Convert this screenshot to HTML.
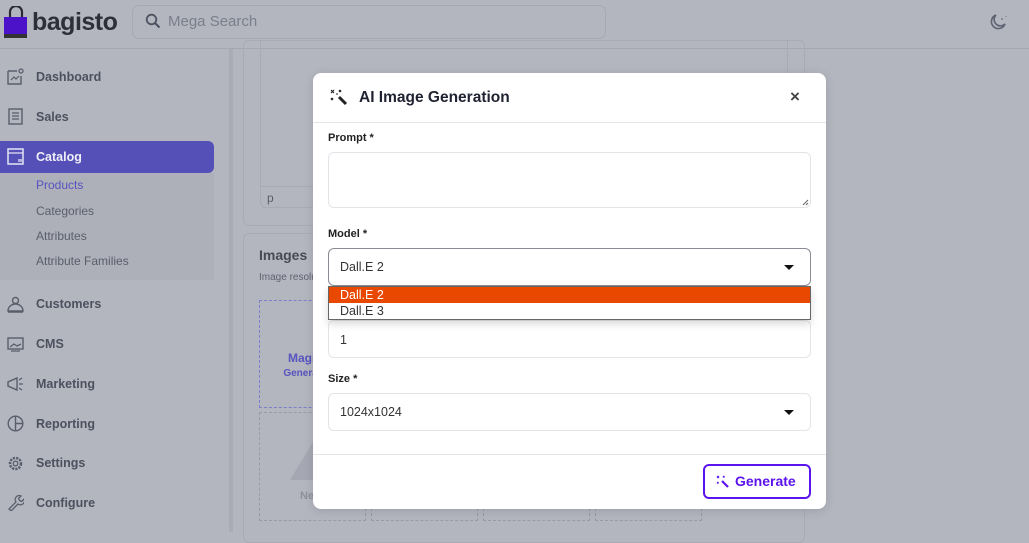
<!DOCTYPE html>
<html><head><style>
*{box-sizing:border-box;margin:0;padding:0}
body{width:1029px;height:532px;overflow:hidden;background:#b3b5bf;font-family:"Liberation Sans",sans-serif;position:relative;color:#3a3d47}
.a{position:absolute}
.nav{position:absolute;left:36px;font-size:12.5px;font-weight:bold;color:#4d515e}
.sub{position:absolute;left:36px;font-size:12px;color:#5a5e6b}
.ic{position:absolute;left:7px;width:17px;height:17px}
.lbl{position:absolute;left:15px;font-size:11px;font-weight:bold;color:#222}
.box{position:absolute;left:15px;width:483px;border:1px solid #e3e4e8;border-radius:6px;background:#fff;font-size:12.5px;color:#333}
.tri{position:absolute;right:16px;top:50%;margin-top:-2px;border-left:5px solid transparent;border-right:5px solid transparent;border-top:5px solid #111}
.dash{position:absolute;border:1px dashed #999aa6}
</style></head><body>
<div class="a" style="left:0;top:48px;width:1029px;height:1px;background:#a5a7b2"></div>
<svg class="a" style="left:4px;top:6px" width="24" height="32" viewBox="0 0 24 32"><path d="M6 11V6a6 6 0 0 1 12 0v5" fill="none" stroke="#2b2a35" stroke-width="2.2"/><rect x="0" y="11" width="23" height="17" fill="#4b12c9"/><rect x="0" y="28" width="23" height="4" fill="#333"/></svg>
<div class="a" style="left:32px;top:8px;font-size:25px;font-weight:bold;color:#2e2f38;letter-spacing:-0.5px">bagisto</div>
<div class="a" style="left:132px;top:5px;width:474px;height:34px;border:1px solid #a6a8b3;border-radius:7px"></div>
<svg class="a" style="left:145px;top:13px" width="16" height="16" viewBox="0 0 16 16"><circle cx="6.5" cy="6.5" r="4.8" fill="none" stroke="#4e5260" stroke-width="1.8"/><path d="M10 10l4.5 4.5" stroke="#4e5260" stroke-width="2"/></svg>
<div class="a" style="left:168px;top:13px;font-size:15px;color:#7b7f8c">Mega Search</div>
<svg class="a" style="left:988px;top:12px" width="22" height="20" viewBox="0 0 22 20"><path d="M8 3a7 7 0 1 0 9 9a6 6 0 0 1-9-9z" fill="none" stroke="#5f6270" stroke-width="1.6"/><path d="M14 6l1 1-1 1-1-1z M18 4l.6.6-.6.6-.6-.6z" fill="#5f6270"/></svg>
<div class="a" style="left:229px;top:49px;width:4px;height:483px;background:#a9abb6"></div>
<div class="a" style="left:0;top:141px;width:214px;height:32px;background:#5550b8;border-radius:0 6px 6px 0"></div>
<div class="a" style="left:0;top:173px;width:214px;height:107px;background:#adafb9"></div>
<svg class="ic" style="top:68px" viewBox="0 0 17 17"><path d="M1 3h9M1 3v13h13V8" fill="none" stroke="#5a5e6b" stroke-width="1.4"/><circle cx="14" cy="3" r="2" fill="none" stroke="#5a5e6b" stroke-width="1.3"/><path d="M4 12l3-3 2 2 3-3" fill="none" stroke="#5a5e6b" stroke-width="1.2"/></svg>
<div class="nav" style="top:70px">Dashboard</div>
<svg class="ic" style="top:108px" viewBox="0 0 17 17"><rect x="2" y="1" width="13" height="15" fill="none" stroke="#5a5e6b" stroke-width="1.4"/><path d="M5 5h7M5 8h7M5 11h7" stroke="#5a5e6b" stroke-width="1.3"/></svg>
<div class="nav" style="top:110px">Sales</div>
<svg class="ic" style="top:148px" viewBox="0 0 17 17"><rect x="1" y="1" width="15" height="15" fill="none" stroke="#e4e4f3" stroke-width="1.5"/><path d="M1 5h15M12 11v3M14 11v3" stroke="#e4e4f3" stroke-width="1.3"/></svg>
<div class="nav" style="top:150px;color:#eeeef8">Catalog</div>
<div class="sub" style="top:178px;color:#5753bf">Products</div>
<div class="sub" style="top:204px">Categories</div>
<div class="sub" style="top:229px">Attributes</div>
<div class="sub" style="top:254px">Attribute Families</div>
<svg class="ic" style="top:296px" viewBox="0 0 17 17"><circle cx="8.5" cy="4.5" r="3" fill="none" stroke="#5a5e6b" stroke-width="1.4"/><path d="M1 15a7.5 7 0 0 1 15 0zM1 16h15" fill="none" stroke="#5a5e6b" stroke-width="1.4"/></svg>
<div class="nav" style="top:297px">Customers</div>
<svg class="ic" style="top:336px" viewBox="0 0 17 17"><rect x="1" y="2" width="15" height="11" fill="none" stroke="#5a5e6b" stroke-width="1.4"/><path d="M3 11l4-3 3 2 4-2M4 15h9" fill="none" stroke="#5a5e6b" stroke-width="1.3"/></svg>
<div class="nav" style="top:337px">CMS</div>
<svg class="ic" style="top:375px" viewBox="0 0 17 17"><path d="M1 7v4l9 4V3z" fill="none" stroke="#5a5e6b" stroke-width="1.4"/><path d="M12 5l3-2M12 9h4M12 13l3 2" stroke="#5a5e6b" stroke-width="1.3"/></svg>
<div class="nav" style="top:377px">Marketing</div>
<svg class="ic" style="top:415px" viewBox="0 0 17 17"><circle cx="8.5" cy="8.5" r="7.3" fill="none" stroke="#5a5e6b" stroke-width="1.4"/><path d="M8.5 1.2v14.6M8.5 8.5h7.3" stroke="#5a5e6b" stroke-width="1.4"/></svg>
<div class="nav" style="top:417px">Reporting</div>
<svg class="ic" style="top:455px" viewBox="0 0 17 17"><circle cx="8.5" cy="8.5" r="5.5" fill="none" stroke="#5a5e6b" stroke-width="2.5" stroke-dasharray="2.2 1.1"/><circle cx="8.5" cy="8.5" r="2.3" fill="none" stroke="#5a5e6b" stroke-width="1.3"/></svg>
<div class="nav" style="top:456px">Settings</div>
<svg class="ic" style="top:494px" viewBox="0 0 17 17"><path d="M2 15l7-7a4 4 0 0 1 5-6l-2.5 2.5 1 2 2 1L17 5a4 4 0 0 1-6 5l-7 7z" fill="none" stroke="#5a5e6b" stroke-width="1.3"/></svg>
<div class="nav" style="top:496px">Configure</div>
<div class="a" style="left:243px;top:40px;width:562px;height:186px;border:1px solid #a8aab5;border-radius:6px"></div>
<div class="a" style="left:260px;top:40px;width:528px;height:168px;border:1px solid #a8aab5;border-radius:0 0 6px 6px"></div>
<div class="a" style="left:260px;top:186px;width:528px;height:1px;background:#a8aab5"></div>
<div class="a" style="left:267px;top:191px;font-size:12px;color:#5a5e6b">p</div>
<div class="a" style="left:243px;top:233px;width:562px;height:310px;border:1px solid #a8aab5;border-radius:6px"></div>
<div class="a" style="left:259px;top:247px;font-size:14px;font-weight:bold;color:#474a55">Images</div>
<div class="a" style="left:259px;top:272px;font-size:10px;color:#5f6270">Image resolution</div>
<div class="dash" style="left:259px;top:300px;width:107px;height:108px;border-color:#7d80c8"></div>
<div class="a" style="left:270px;top:351px;font-size:12px;font-weight:bold;color:#5753bf;width:70px;text-align:center">Magic<br><span style="font-size:10px">Generate</span></div>
<div class="dash" style="left:259px;top:412px;width:107px;height:109px"></div>
<div class="dash" style="left:371px;top:412px;width:107px;height:109px"></div>
<div class="dash" style="left:483px;top:412px;width:107px;height:109px"></div>
<div class="dash" style="left:595px;top:412px;width:107px;height:109px"></div>
<div class="a" style="left:290px;top:440px;border-left:24px solid transparent;border-right:24px solid transparent;border-bottom:40px solid #a5a7b2"></div>
<div class="a" style="left:300px;top:490px;font-size:11px;color:#8e919c;font-weight:bold">Ne</div>
<div class="a" style="left:313px;top:73px;width:513px;height:436px;background:#fff;border-radius:8px;box-shadow:0 2px 10px rgba(0,0,0,.12)">
 <svg class="a" style="left:17px;top:16px" width="18" height="18" viewBox="0 0 18 18"><path d="M9 8l7 7" stroke="#222" stroke-width="3"/><path d="M1 1l3 3M4 1L1 4M1 9l2 2M3 9l-2 2M9 1l2 2M11 1L9 3" stroke="#222" stroke-width="1.2"/><path d="M6 5l1-1 1 1-1 1z" fill="#222"/></svg>
 <div class="a" style="left:46px;top:16px;font-size:15.5px;font-weight:bold;color:#1f2230">AI Image Generation</div>
 <div class="a" style="left:477px;top:14px;font-size:17px;font-weight:bold;color:#444">×</div>
 <div class="a" style="left:0;top:49px;width:513px;height:1px;background:#e4e5ea"></div>
 <div class="lbl" style="top:59px">Prompt *</div>
 <div class="box" style="top:79px;height:56px"><svg class="a" style="right:1px;bottom:1px" width="7" height="7"><path d="M1 6l5-5M4 6l2-2" stroke="#666" stroke-width="1"/></svg></div>
 <div class="lbl" style="top:155px">Model *</div>
 <div class="box" style="top:175px;height:38px;border-color:#8a8c94"><span class="a" style="left:11px;top:11px">Dall.E 2</span><div class="tri"></div></div>
 <div class="box" style="top:247px;height:38px"><span class="a" style="left:11px;top:12px">1</span></div>
 <div class="box" style="top:213px;height:34px;border-radius:0;border-color:#666;box-shadow:0 4px 8px rgba(0,0,0,.15)">
  <div style="height:16px;background:#e94801;color:#fff;padding-left:11px;font-size:12.5px;line-height:16px">Dall.E 2</div>
  <div style="height:16px;color:#333;padding-left:11px;font-size:12.5px;line-height:16px">Dall.E 3</div>
 </div>
 <div class="lbl" style="top:300px">Size *</div>
 <div class="box" style="top:320px;height:38px"><span class="a" style="left:11px;top:11px">1024x1024</span><div class="tri"></div></div>
 <div class="a" style="left:0;top:381px;width:513px;height:1px;background:#e4e5ea"></div>
 <div class="a" style="left:390px;top:391px;width:108px;height:35px;border:2px solid #5b14ee;border-radius:6px;color:#5b14ee;font-weight:bold;font-size:14px;padding:7px 0 0 30px">Generate</div>
 <svg class="a" style="left:403px;top:402px" width="13" height="13" viewBox="0 0 13 13"><path d="M6 6l6 6" stroke="#5b14ee" stroke-width="2.2"/><path d="M1 1l2 2M3 1L1 3M7 1l1.5 1.5M8.5 1L7 2.5M1 7l1.5 1.5M2.5 7L1 8.5" stroke="#5b14ee" stroke-width="1"/></svg>
</div>
</body></html>
